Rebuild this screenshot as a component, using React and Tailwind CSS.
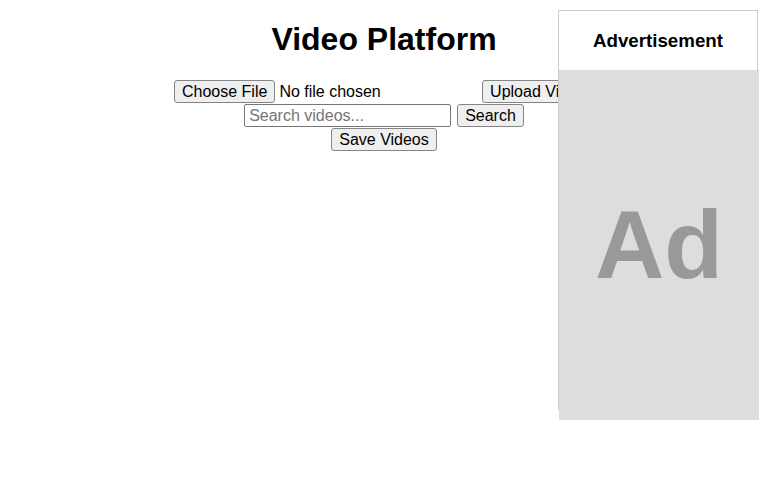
export default function App() {
  const btn =
    "h-[23px] px-[7px] border border-[#858585] rounded-[3px] bg-[#efefef] text-[16px] leading-[21px] text-black whitespace-nowrap";
  return (
    <div className="relative min-h-[480px] bg-white text-black font-['Liberation_Sans',Arial,sans-serif]">
      <div className="pt-[21px] flex flex-col items-center">
        <h1 className="text-[32px] font-bold leading-[37px] mb-[22px]">Video Platform</h1>
        <div className="flex h-6 items-start pl-2">
          <div className="w-[304px] h-[23px] flex items-center">
            <button className={btn}>Choose File</button>
            <span className="ml-[4px] text-[16px] whitespace-nowrap">No file chosen</span>
          </div>
          <button className={`${btn} ml-[4px] w-[120px]`}>Upload Videos</button>
        </div>
        <div className="flex h-6 items-start">
          <input
            type="text"
            placeholder="Search videos..."
            className="w-[207px] h-[23px] border border-[#767676] rounded-[2px] px-[4px] text-[16px] placeholder:text-[#757575] bg-white outline-none"
          />
          <button className={`${btn} ml-[6px]`}>Search</button>
        </div>
        <div className="flex h-6 items-start">
          <button className={btn}>Save Videos</button>
        </div>
      </div>

      <div className="absolute top-[10px] right-[10px] z-10 w-[200px] h-[400px] border border-[#cccccc] bg-white">
        <h3 className="my-[18.72px] text-center text-[18.72px] font-bold leading-[21.5px]">Advertisement</h3>
        <div className="w-[200px] h-[350px] bg-[#dddddd] flex items-center justify-center">
          <span className="text-[96px] font-bold text-[#999999] leading-[normal]">Ad</span>
        </div>
      </div>
    </div>
  );
}
